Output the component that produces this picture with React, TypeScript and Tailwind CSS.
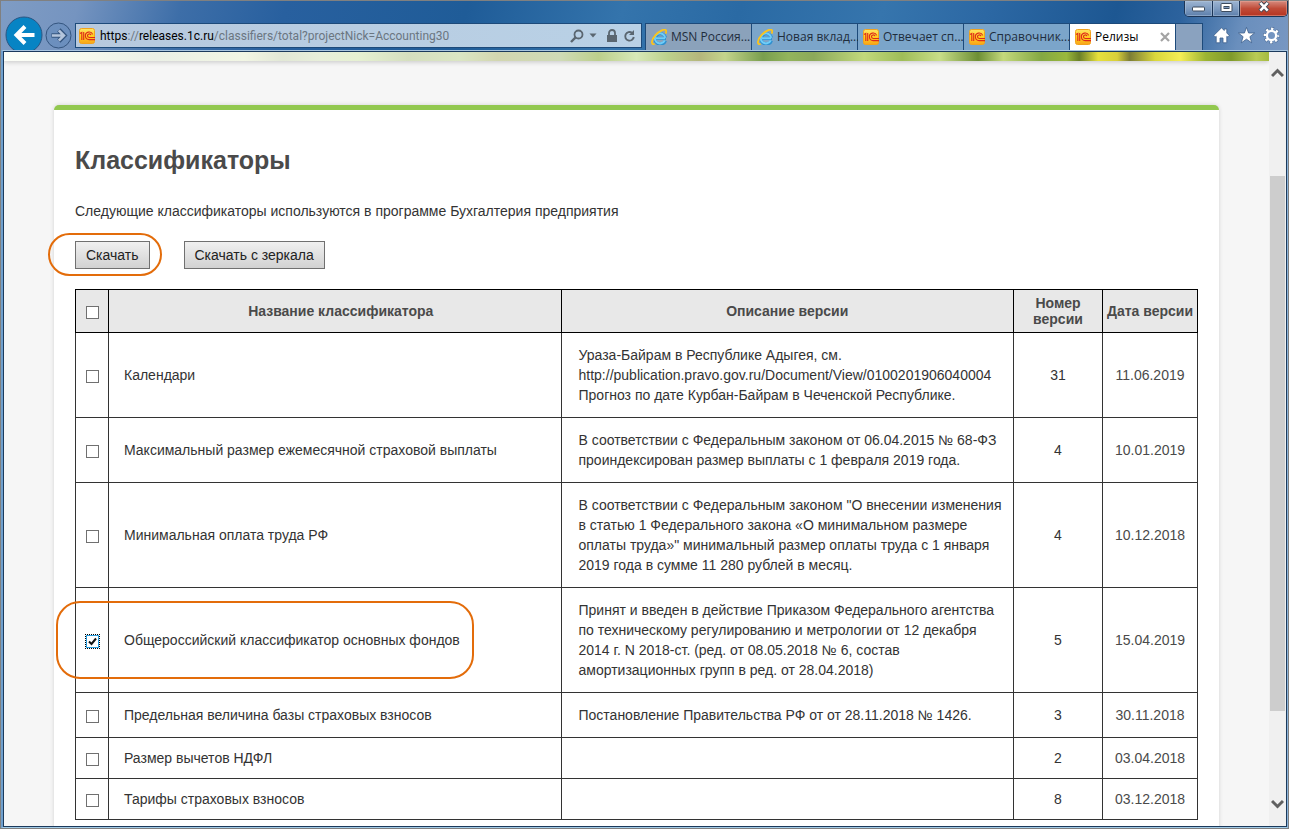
import React from 'react';

interface Classifier {
  id: string;
  name: string;
  description: string;
  version: number;
  date: string;
}

interface Tab {
  title: string;
  icon: 'ie' | '1c';
  state: 'recent' | 'normal' | 'active';
}

const classifiers: Classifier[] = [
  {
    id: 'calendars',
    name: 'Календари',
    description:
      'Ураза-Байрам в Республике Адыгея, см.\nhttp://publication.pravo.gov.ru/Document/View/0100201906040004\nПрогноз по дате Курбан-Байрам в Чеченской Республике.',
    version: 31,
    date: '11.06.2019',
  },
  {
    id: 'max-payment',
    name: 'Максимальный размер ежемесячной страховой выплаты',
    description:
      'В соответствии с Федеральным законом от 06.04.2015 № 68-ФЗ\nпроиндексирован размер выплаты с 1 февраля 2019 года.',
    version: 4,
    date: '10.01.2019',
  },
  {
    id: 'min-wage',
    name: 'Минимальная оплата труда РФ',
    description:
      'В соответствии с Федеральным законом "О внесении изменения\nв статью 1 Федерального закона «О минимальном размере\nоплаты труда»" минимальный размер оплаты труда с 1 января\n2019 года в сумме 11 280 рублей в месяц.',
    version: 4,
    date: '10.12.2018',
  },
  {
    id: 'okof',
    name: 'Общероссийский классификатор основных фондов',
    description:
      'Принят и введен в действие Приказом Федерального агентства\nпо техническому регулированию и метрологии от 12 декабря\n2014 г. N 2018-ст. (ред. от 08.05.2018 № 6, состав\nамортизационных групп в ред. от 28.04.2018)',
    version: 5,
    date: '15.04.2019',
  },
  {
    id: 'limit-base',
    name: 'Предельная величина базы страховых взносов',
    description: 'Постановление Правительства РФ от от 28.11.2018 № 1426.',
    version: 3,
    date: '30.11.2018',
  },
  { id: 'ndfl', name: 'Размер вычетов НДФЛ', description: '', version: 2, date: '03.04.2018' },
  { id: 'tariffs', name: 'Тарифы страховых взносов', description: '', version: 8, date: '03.12.2018' },
];

const tabs: Tab[] = [
  { title: 'MSN Россия...', icon: 'ie', state: 'recent' },
  { title: 'Новая вклад...', icon: 'ie', state: 'normal' },
  { title: 'Отвечает сп...', icon: '1c', state: 'normal' },
  { title: 'Справочник...', icon: '1c', state: 'normal' },
  { title: 'Релизы', icon: '1c', state: 'active' },
];

const tabColors = {
  recent: 'bg-[#8ba2bb] text-[#1f2d3d]',
  normal: 'bg-[#7ba5ca] text-[#1f2d3d]',
  active: 'bg-white text-black',
};

function OneCIcon() {
  return (
    <svg width="16" height="16" viewBox="0 0 16 16" className="shrink-0" aria-hidden="true">
      <defs>
        <linearGradient id="onec" x1="0" y1="0" x2="0" y2="1">
          <stop offset="0" stopColor="#ffe566" />
          <stop offset="0.5" stopColor="#ffcf1f" />
          <stop offset="1" stopColor="#f9a51a" />
        </linearGradient>
      </defs>
      <rect x="0.5" y="0.5" width="15" height="15" rx="2" fill="url(#onec)" stroke="#f2a21c" />
      <g fill="none" stroke="#dd2a1b" strokeWidth="1.1">
        <polyline points="1,5.5 2.8,4.4 2.8,12" />
        <line x1="4.7" y1="4" x2="4.7" y2="12" />
        <path d="M13.7 6.4A3.8 3.8 0 1 0 10.2 11.6H16" />
        <path d="M12 7.2A1.8 1.8 0 1 0 10.2 9.5H16" />
      </g>
    </svg>
  );
}

function IeIcon() {
  return (
    <svg width="16" height="16" viewBox="0 0 16 16" className="shrink-0" aria-hidden="true">
      <g fill="none">
        <path d="M15 9.3H5.4M14.4 11.6A5.4 5.2 0 1 1 14.5 8.6" stroke="#2e8fce" strokeWidth="3.2" />
        <path d="M14.2 9.2H5M13.8 11.4A5.2 5 0 1 1 14.2 8.8" stroke="#6fcdf8" strokeWidth="2" />
        <path d="M3.6 15C-.4 16 .2 11 4.2 6.4C8.4 1.6 14 -.6 15 1.4C15.4 2.4 15.2 3.4 14.6 4.6" stroke="#fbc41c" strokeWidth="1.8" />
      </g>
    </svg>
  );
}

function WindowControls() {
  return (
    <div className="absolute top-0 right-0 flex h-4 overflow-hidden rounded-b-[5px] border border-t-0 border-[#1c3557]">
      <button aria-label="Свернуть" className="flex w-7 items-end justify-center border-r border-[#1c3557] bg-linear-to-b from-[#9db4d2] via-[#7f9cc1] to-[#5d7fab] pb-[3px] shadow-[inset_0_0_0_1px_#b3c7de80]">
        <svg width="13" height="7" viewBox="0 0 13 7">
          <rect x="0.5" y="1" width="12" height="4" rx="1" fill="#fff" stroke="#3c4b5e" />
        </svg>
      </button>
      <button aria-label="Развернуть" className="flex w-[27px] items-center justify-center border-r border-[#1c3557] bg-linear-to-b from-[#9db4d2] via-[#7f9cc1] to-[#5d7fab] pb-[3px] shadow-[inset_0_0_0_1px_#b3c7de80]">
        <svg width="13" height="11" viewBox="0 0 13 11">
          <rect x="1" y="1.5" width="11" height="8" rx="1" fill="#fff" stroke="#3c4b5e" />
          <rect x="4" y="4.5" width="5" height="2" fill="#7d99bd" stroke="#3c4b5e" />
        </svg>
      </button>
      <button aria-label="Закрыть" className="flex w-[47px] items-center justify-center bg-linear-to-b from-[#d58a7e] via-[#c04b38] to-[#b53320] pb-[3px] shadow-[inset_0_0_0_1px_#e8a99c80]">
        <svg width="14" height="12" viewBox="0 0 14 12">
          <path d="M3 1.5L11 10M11 1.5L3 10" stroke="#3e4552" strokeWidth="4.4" />
          <path d="M3.3 1.8L10.7 9.7M10.7 1.8L3.3 9.7" stroke="#fff" strokeWidth="2.6" />
        </svg>
      </button>
    </div>
  );
}

function AddressBar() {
  return (
    <div className="flex h-[25px] min-w-0 flex-1 items-center border border-[#1d4a7a] bg-linear-to-r from-[#b7c9de] to-[#b9d1e6] pr-[5px] pl-[3px] text-[#5a6670]">
      <OneCIcon />
      <div className="min-w-0 flex-1 truncate pl-[5px] font-[Roboto,'Noto_Sans',sans-serif] text-xs leading-4 text-[#6b7681]">
        <span className="text-black">https</span>://<span className="text-black">releases.1c.ru</span>
        /classifiers/total?projectNick=Accounting30
      </div>
      <div className="flex items-center gap-[5px]">
        <button aria-label="Поиск">
          <svg width="14" height="14" viewBox="0 0 14 14" fill="none" stroke="currentColor">
            <circle cx="8.5" cy="5.5" r="4" strokeWidth="1.8" />
            <path d="M5.6 8.4L1 13" strokeWidth="2.4" />
          </svg>
        </button>
        <button aria-label="Показать список">
          <svg width="8" height="5" viewBox="0 0 8 5" fill="currentColor">
            <path d="M0.5 0.5H7.5L4 4.5Z" />
          </svg>
        </button>
        <svg width="12" height="14" viewBox="0 0 12 14" className="ml-1" aria-hidden="true">
          <path d="M3 6V4A3 3 0 0 1 9 4V6" fill="none" stroke="currentColor" strokeWidth="1.8" />
          <rect x="1" y="6" width="10" height="7" fill="currentColor" />
        </svg>
        <button aria-label="Обновить">
          <svg width="13" height="14" viewBox="0 0 13 14" fill="none" stroke="currentColor">
            <path d="M9 3.8A4.3 4.3 0 1 0 10.8 8" strokeWidth="1.9" />
            <path d="M11 1V6H6Z" fill="currentColor" stroke="none" />
          </svg>
        </button>
      </div>
    </div>
  );
}

function BrowserHeader() {
  return (
    <header className="relative flex h-[49px] shrink-0 items-start overflow-hidden bg-[linear-gradient(105deg,#7f9cc4_0,#7594c0_6%,#3d6ea8_14%,#28609f_22%,#1f5c98_36%,#3474ac_48%,#2a6aa4_57%,#3675ad_68%,#2c68a4_76%,#1d5792_86%,#2c629d_91%,#6a8fbd_96%,#7897c2_100%)]">
      <WindowControls />
      <div className="flex items-center pt-[15px] pl-1">
        <button aria-label="Назад">
          <svg width="38" height="38" viewBox="0 0 38 38" fill="none">
            <circle cx="19" cy="19" r="18" fill="#0784c4" stroke="#2b5683" />
            <path d="M10.5 19H29.5M20 10.5L11.5 19L20 27.5" stroke="#fff" strokeWidth="4" />
          </svg>
        </button>
        <button aria-label="Вперед" className="pr-[3px] pl-[2px]">
          <svg width="27" height="27" viewBox="0 0 27 27" fill="none">
            <circle cx="13.5" cy="13.5" r="12.5" fill="#6189bb" fillOpacity="0.5" stroke="#34557f" />
            <path d="M6.5 13.5H19M13.8 8L19.3 13.5L13.8 19" stroke="#34557f" strokeWidth="4.6" />
            <path d="M7 13.5H18.5M13.8 8.4L18.9 13.5L13.8 18.6" stroke="#b4c5dc" strokeWidth="2.6" />
          </svg>
        </button>
      </div>
      <div className="flex min-w-0 flex-1 pt-[22px]">
        <AddressBar />
        <nav className="ml-[3px] flex h-[27px] border-t border-l border-[#1d4a7a]">
          {tabs.map((tab) => (
            <div
              key={tab.title}
              className={`flex w-[106px] items-center border-r border-[#1d4a7a] px-[5px] ${tabColors[tab.state]}`}
            >
              {tab.icon === 'ie' ? <IeIcon /> : <OneCIcon />}
              <a href="#" className="flex-1 pl-1 font-['Open_Sans','Noto_Sans',sans-serif] text-xs whitespace-nowrap">
                {tab.title}
              </a>
              {tab.state === 'active' && (
                <button aria-label="Закрыть вкладку">
                  <svg width="10" height="10" viewBox="0 0 10 10" stroke="#a3a3a3" strokeWidth="2.2">
                    <path d="M1 1L9 9M9 1L1 9" />
                  </svg>
                </button>
              )}
            </div>
          ))}
          <button aria-label="Новая вкладка" className="w-[27px] border-r border-[#1d4a7a] bg-[#8aa2bf]" />
        </nav>
        <div className="flex h-[25px] items-center gap-2 pr-2 pl-[10px]">
          <button aria-label="Домой">
            <svg width="17" height="17" viewBox="0 0 17 17">
              <path d="M8.5 0.8L0.8 8.4L2.4 10L3.2 9.3V15.8H7V11H10V15.8H13.8V9.3L14.6 10L16.2 8.4L13.8 6V2H11.2V3.5Z" fill="#fff" stroke="#3d5f8c" strokeWidth="0.8" />
            </svg>
          </button>
          <button aria-label="Избранное">
            <svg width="17" height="17" viewBox="0 0 17 17">
              <path d="M8.5 0.4L10.6 6H16.6L11.9 9.7L13.7 15.8L8.5 12.2L3.3 15.8L5.1 9.7L0.4 6H6.4Z" fill="#fff" stroke="#3d5f8c" strokeWidth="0.8" />
            </svg>
          </button>
          <button aria-label="Сервис">
            <svg width="17" height="17" viewBox="0 0 17 17" fill="none">
              <circle cx="8.5" cy="8.5" r="6.4" stroke="#3d5f8c" strokeWidth="4" strokeDasharray="3 2.03" strokeDashoffset="1.5" />
              <circle cx="8.5" cy="8.5" r="6.5" stroke="#fff" strokeWidth="2.8" strokeDasharray="2.4 2.7" strokeDashoffset="1.2" />
              <circle cx="8.5" cy="8.5" r="4.6" stroke="#fff" strokeWidth="2.2" />
            </svg>
          </button>
        </div>
      </div>
    </header>
  );
}

function Scrollbar() {
  return (
    <div className="flex w-[17px] shrink-0 flex-col bg-[#f0f0f0] px-px">
      <button aria-label="Вверх" className="flex h-[42px] items-center justify-center">
        <svg width="13" height="10" viewBox="0 0 13 10" fill="none" stroke="#606060" strokeWidth="3">
          <path d="M1 8L6.5 2.5L12 8" />
        </svg>
      </button>
      <div className="flex-[82]" />
      <div className="flex-[535] bg-[#cdcdcd]" />
      <div className="flex-[71]" />
      <button aria-label="Вниз" className="flex h-11 items-center justify-center">
        <svg width="13" height="10" viewBox="0 0 13 10" fill="none" stroke="#606060" strokeWidth="3">
          <path d="M1 2L6.5 7.5L12 2" />
        </svg>
      </button>
    </div>
  );
}

function Checkbox({ label, checked, onChange }: { label: string; checked: boolean; onChange: () => void }) {
  return (
    <span className="relative mt-[2px] ml-[10px] block size-[13px]">
      <input
        type="checkbox"
        aria-label={label}
        checked={checked}
        onChange={onChange}
        className="block size-[13px] appearance-none border border-[#707070] bg-white outline-dotted outline-0 outline-black checked:border-[#2a9fe0] checked:outline-1"
      />
      {checked && (
        <svg width="13" height="13" viewBox="0 0 13 13" fill="none" className="pointer-events-none absolute inset-0">
          <path d="M3 6.5L5.5 9L10 3.5" stroke="#111" strokeWidth="2" />
        </svg>
      )}
    </span>
  );
}

function ClassifierTable() {
  const [selected, setSelected] = React.useState<string[]>(['okof']);

  const toggle = (id: string) => {
    setSelected((prev) => (prev.includes(id) ? prev.filter((s) => s !== id) : [...prev, id]));
  };

  const allSelected = selected.length === classifiers.length;

  return (
    <table className="mt-5 w-full table-fixed border-collapse text-sm leading-5 text-[#333]">
      <colgroup>
        <col className="w-[33px]" />
        <col />
        <col />
        <col className="w-[89px]" />
        <col className="w-[95px]" />
      </colgroup>
      <thead>
        <tr className="h-[43px] bg-[#e8e8e8] leading-4 text-[#4a4a4a]">
          <th className="border border-black">
            <Checkbox
              label="Выбрать все"
              checked={allSelected}
              onChange={() => setSelected(allSelected ? [] : classifiers.map((c) => c.id))}
            />
          </th>
          <th className="border border-black pl-3">Название классификатора</th>
          <th className="border border-black">Описание версии</th>
          <th className="border border-black">
            Номер
            <br />
            версии
          </th>
          <th className="border border-black whitespace-nowrap">Дата версии</th>
        </tr>
      </thead>
      <tbody>
        {classifiers.map((item) => (
          <tr key={item.id}>
            <td className="relative border border-[#333]">
              <Checkbox label={item.name} checked={selected.includes(item.id)} onChange={() => toggle(item.id)} />
              {item.id === 'okof' && (
                <span className="pointer-events-none absolute top-[13px] -left-5 z-10 h-[78px] w-[418px] rounded-3xl border-2 border-[#e36c0a]" />
              )}
            </td>
            <td className="border border-[#333] py-[10px] pl-[15px]">{item.name}</td>
            <td className="border border-[#333] pl-[17px]">
              {item.description && <div className="py-3 whitespace-pre-line">{item.description}</div>}
            </td>
            <td className="border border-[#333] text-center">{item.version}</td>
            <td className="border border-[#333] text-center text-[#4a4a4a]">{item.date}</td>
          </tr>
        ))}
      </tbody>
    </table>
  );
}

export default function App() {
  return (
    <div className="flex h-screen flex-col border border-[#808080] bg-[#6f9fcd]">
      <BrowserHeader />
      <div className="flex min-h-0 flex-1 border-t border-r border-b border-l-2 border-t-[#a9c6e0] border-r-[#8db4d9] border-b-[#a3cbe6] border-l-[#6f9fcd]">
        <div className="flex min-w-0 flex-1 border border-[#1b3a5c]">
          <main className="min-w-0 flex-1 overflow-hidden bg-[#f6f6f6] font-['Liberation_Sans',Arial,sans-serif]">
            <div className="h-[9px] bg-[linear-gradient(90deg,#fcfef8_0,#f6faee_6%,#ebf0e6_12%,#f2f6e4_19%,#e2e8d6_22%,#e8efda_25%,#e6f1d2_28%,#d5dfbf_32%,#dbe6c4_36%,#d2d6b0_39%,#cfdab6_44%,#bccf8c_47%,#d7e8b8_50%,#bcd18c_52.5%,#b5b67c_55%,#c4d48c_57%,#799e4e_60%,#93b45c_62%,#8ca95a_64%,#c2d87c_68%,#9fbd58_71%,#c8dd88_74%,#6d8f35_77%,#c4d97c_79%,#84a843_82%,#9ab83c_84%,#6a8028_85%,#e6e03c_86.5%,#d8cf3a_88%,#7c7d35_89%,#d9d73c_91%,#f5ee55_93%,#9cb433_95%,#7f9a2b_97%,#b9cb55_99%,#a5bb40_100%)] shadow-[0_1px_5px_#00000033]" />
            <section className="mx-[50px] mt-11 rounded-t-[5px] border-t-[5px] border-[#92c84f] bg-white px-[21px] pt-[35px] pb-10 shadow-[0_0_4px_#00000026]">
              <h1 className="text-[25px] leading-[30px] font-bold text-[#4a4a4a]">Классификаторы</h1>
              <p className="mt-[26px] text-sm leading-5 text-[#333]">
                Следующие классификаторы используются в программе Бухгалтерия предприятия
              </p>
              <div className="mt-5 flex gap-[34px] text-sm text-[#222]">
                <div className="relative">
                  <button className="h-7 border border-[#707070] bg-linear-to-b from-[#f0f0f0] to-[#d2d2d2] px-[10px]">
                    Скачать
                  </button>
                  <span className="pointer-events-none absolute -top-2 -right-3 -bottom-[7px] -left-[27px] rounded-3xl border-2 border-[#e36c0a]" />
                </div>
                <button className="h-7 border border-[#707070] bg-linear-to-b from-[#f0f0f0] to-[#d2d2d2] px-[10px]">
                  Скачать с зеркала
                </button>
              </div>
              <ClassifierTable />
            </section>
          </main>
          <Scrollbar />
        </div>
      </div>
    </div>
  );
}
